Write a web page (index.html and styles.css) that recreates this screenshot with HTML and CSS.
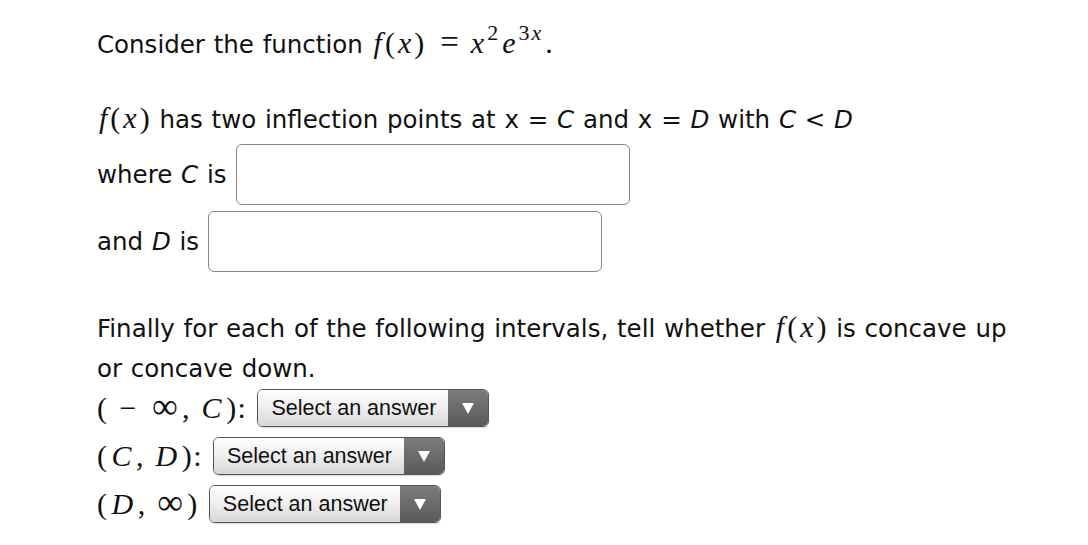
FILE: index.html
```html
<!DOCTYPE html>
<html>
<head>
<meta charset="utf-8">
<link rel="stylesheet" href="styles.css">
</head>
<body>
<div class="page">
  <p class="line l1">Consider the function <span class="m"><i>f</i>(<i>x</i>)<span class="rel">=</span><i>x</i><sup>2</sup><i>e</i><sup>3<i>x</i></sup>.</span></p>
  <p class="line l2"><span class="m"><i>f</i>(<i>x</i>)</span> has two inflection points at x = <i>C</i> and x = <i>D</i> with <i>C</i> &lt; <i>D</i></p>
  <div class="row r1"><span>where <i>C</i> is</span><span class="box"></span></div>
  <div class="row r2"><span>and <i>D</i> is</span><span class="box"></span></div>
  <p class="line l3">Finally for each of the following intervals, tell whether <span class="m"><i>f</i>(<i>x</i>)</span> is concave up or concave down.</p>
  <div class="sel-row s1"><span class="m lab">(<span class="op">&minus;</span><span class="inf">∞</span>,&thinsp;<i>C</i>):</span><span class="sel"><span class="st">Select an answer</span><span class="arr"></span></span></div>
  <div class="sel-row"><span class="m lab">(<i>C</i>,&thinsp;<i>D</i>):</span><span class="sel"><span class="st">Select an answer</span><span class="arr"></span></span></div>
  <div class="sel-row"><span class="m lab">(<i>D</i>,&thinsp;<span class="inf">∞</span>)</span><span class="sel"><span class="st">Select an answer</span><span class="arr"></span></span></div>
</div>
</body>
</html>
```
FILE: styles.css
```css
html, body { margin: 0; padding: 0; background: #fff; }
body { font-family: "DejaVu Sans", Verdana, sans-serif; font-size: 24.5px; color: #111; word-spacing: 1px; }
.page { padding: 22px 0 0 97px; width: 930px; }
.line { margin: 0; line-height: 40px; }
.l1 { height: 42px; }
.l2 { margin-top: 34px; }
.m { font-family: "Liberation Serif", "DejaVu Serif", serif; font-size: 30px; letter-spacing: 1px; word-spacing: 0; }
.m i { padding: 0 2px; }
.rel { padding: 0 9px 0 15px; font-size: 33px; }
.op { padding: 0 11px; }
.inf { display: inline-block; font-size: 36px; line-height: 30px; padding: 0 3px; }
.m sup { font-size: 22px; letter-spacing: 1px; vertical-align: 0; position: relative; top: -13px; padding: 0 1px 0 0; }
.m sup i { padding: 0 2px 0 1px; }
.lab { letter-spacing: 1.5px; }
.lab i { padding: 0 3px; }
.row { display: flex; align-items: center; gap: 9px; }
.r1 { margin-top: 4px; }
.r2 { margin-top: 6px; }
.box { display: block; width: 392px; height: 59px; border: 1px solid #888; border-radius: 6px; background: #fff; }
.l3 { margin-top: 35px; }
.sel-row { display: flex; align-items: center; gap: 10px; height: 48px; }
.s1 { margin-top: -5px; }
.sel { display: flex; align-items: stretch; height: 36px; border: 1px solid #555; border-radius: 6px; overflow: hidden; box-shadow: 0 1px 1px rgba(0,0,0,0.15); }
.st { font-family: "Liberation Sans", Arial, sans-serif; font-size: 21.5px; word-spacing: 0; display: flex; align-items: center; padding: 0 12px 0 13px; background: linear-gradient(#ffffff, #f2f2f2 40%, #d6d6d6); color: #111; }
.arr { width: 40px; background: linear-gradient(#7c7c7c, #5a5a5a); position: relative; }
.arr::after { content: ""; position: absolute; left: 14px; top: 13px; border-left: 6px solid transparent; border-right: 6px solid transparent; border-top: 11px solid #fff; }
```
